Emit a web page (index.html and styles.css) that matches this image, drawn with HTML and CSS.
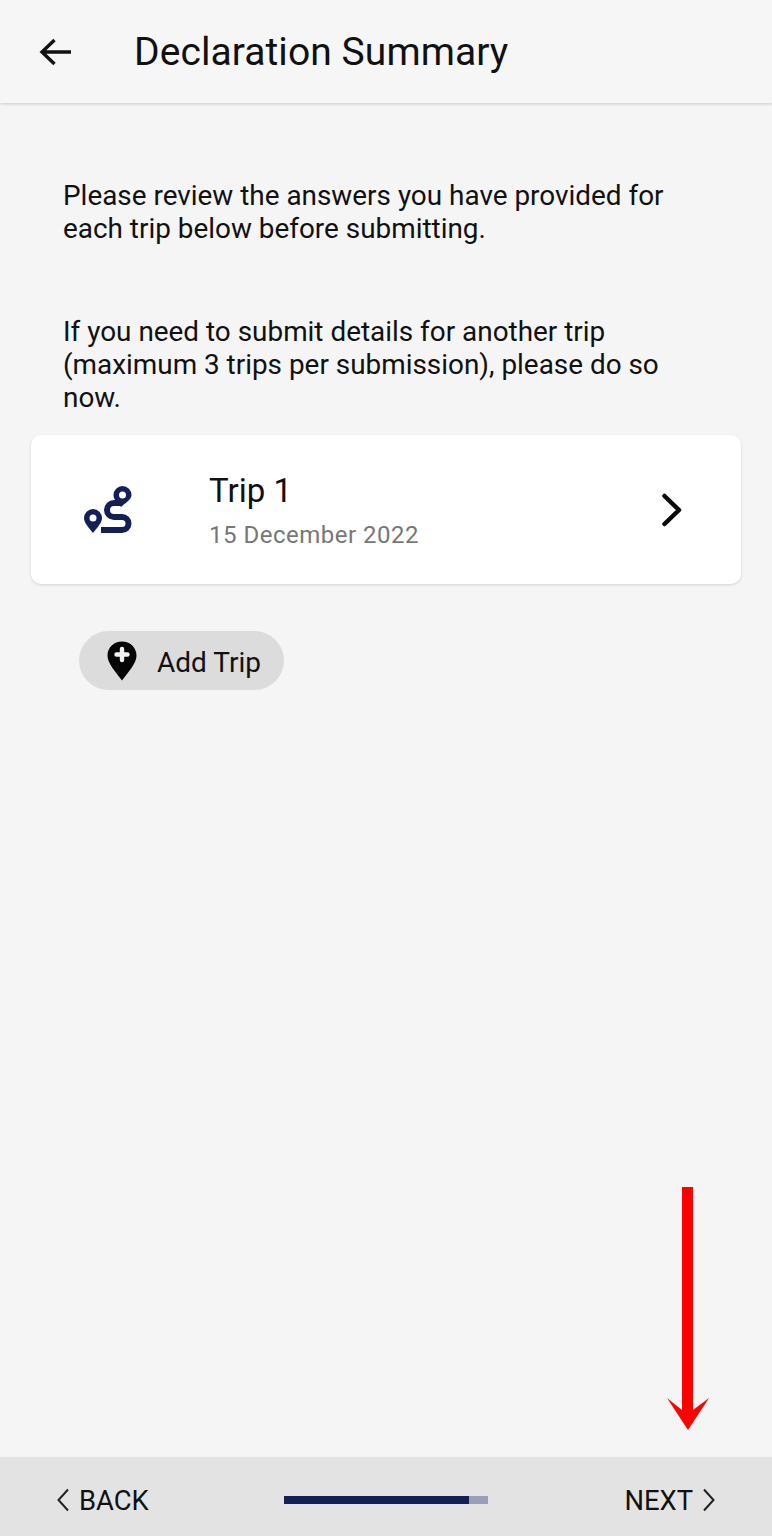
FILE: index.html
```html
<!DOCTYPE html>
<html lang="en">
<head>
    <meta charset="UTF-8" />
    <meta name="viewport" content="width=device-width, initial-scale=1.0" />
    <title>Declaration Summary</title>
    <link rel="stylesheet" href="styles.css">
</head>
<body>
    <div class="screen">
        <header class="topbar">
            <svg class="back-icon" viewBox="0 0 34 30" width="34" height="30">
                <path d="M32 15H3M15.500 3 3 15l12.500 12" fill="none" stroke="#111" stroke-width="3.400" />
            </svg>
            <h1 class="title">Declaration Summary</h1>
        </header>

        <main class="content">
            <p class="intro intro-first">Please review the answers you have provided for each trip below before submitting.</p>
            <p class="intro intro-second">If you need to submit details for another trip (maximum 3 trips per submission), please do so now.</p>

            <div class="trip-card">
                <svg class="trip-icon" viewBox="0 0 48 48" width="48" height="48">
                    <path fill="#141f55" fill-rule="evenodd" d="M9 23a9 9 0 0 0-9 9c0 5 4.800 9.500 9 15 4.200-5.500 9-10 9-15a9 9 0 0 0-9-9Zm0 5.500a3.500 3.500 0 1 1 0 7 3.500 3.500 0 0 1 0-7Z" />
                    <path fill="#141f55" fill-rule="evenodd" d="M38.500 0a9 9 0 0 0-9 9c0 5 4.500 8 7.500 12 3.500-3.500 10.500-7 10.500-12a9 9 0 0 0-9-9Zm0 5.500a3.500 3.500 0 1 1 0 7 3.500 3.500 0 0 1 0-7Z" />
                    <path fill="none" stroke="#141f55" stroke-width="6" d="M38 17H30a7 7 0 0 0 0 14H38a6.500 6.500 0 0 1 0 13H17" />
                </svg>
                <div class="trip-text">
                    <div class="trip-name">Trip 1</div>
                    <div class="trip-date">15 December 2022</div>
                </div>
                <svg class="chevron" viewBox="0 0 22 34" width="22" height="34">
                    <path d="M3.500 3 18 17 3.500 31" fill="none" stroke="#0a0a0a" stroke-width="4.500" stroke-linecap="round" stroke-linejoin="round" />
                </svg>
            </div>

            <button class="add-trip">
                <svg viewBox="0 0 30 40" width="30" height="40">
                    <path fill="#050505" d="M15 .5C7 .5.500 6.500.500 14.500c0 8 8 16 14.500 25 6.500-9 14.500-17 14.500-25C29.500 6.500 23 .5 15 .5Z" />
                    <path fill="none" stroke="#f2f2f2" stroke-width="4.400" stroke-linecap="round" d="M15 8v11M9.500 13.500h11" />
                </svg>
                <span class="add-label">Add Trip</span>
            </button>
        </main>

        <footer class="bottombar">
            <div class="nav-btn">
                <svg viewBox="0 0 14 24" width="14" height="24"><path d="M12 1.500 2.500 12 12 22.500" fill="none" stroke="#222" stroke-width="2" /></svg>
                <span class="nav-label">BACK</span>
            </div>
            <div class="progress"><div class="progress-fill"></div></div>
            <div class="nav-btn">
                <span class="nav-label">NEXT</span>
                <svg viewBox="0 0 14 24" width="14" height="24"><path d="M2 1.500 11.500 12 2 22.500" fill="none" stroke="#222" stroke-width="2" /></svg>
            </div>
        </footer>

        <svg class="red-arrow" viewBox="0 0 42 243" width="42" height="243">
            <path fill="#ff0000" d="M15 0h11v223l16-12-21 32-21-32 15 12Z" />
        </svg>
    </div>
</body>
</html>
```

FILE: styles.css
```css
body {
    margin: 0;
    padding: 0;
    font-family: Roboto, sans-serif;
    background-color: #f5f5f5;
}
.screen {
    position: relative;
    display: flex;
    flex-direction: column;
    width: 772px;
    height: 1536px;
    overflow: hidden;
}
.topbar {
    display: flex;
    align-items: center;
    height: 103px;
    padding-left: 39px;
    flex-shrink: 0;
    background-color: #f6f6f6;
    box-shadow: 0 1px 3px rgba(0, 0, 0, 0.18);
}
.title {
    margin: 0 0 0 61px;
    font-size: 39px;
    font-weight: 400;
    letter-spacing: 0.07px;
    color: #111;
}
.content {
    flex: 1;
    padding: 76px 31px 0;
}
.intro {
    margin: 0 32px;
    font-size: 27.900px;
    line-height: 33px;
    color: #111;
}
.intro-second {
    margin-top: 70px;
    margin-bottom: 21px;
}
.trip-card {
    display: flex;
    align-items: center;
    height: 149px;
    padding: 0 58px 0 53px;
    background-color: #fff;
    border-radius: 10px;
    box-shadow: 0 1px 3px rgba(0, 0, 0, 0.14);
}
.trip-text {
    flex: 1;
    margin-left: 77px;
    padding-top: 2px;
}
.trip-name {
    font-size: 33px;
    line-height: 38px;
    color: #111;
}
.trip-date {
    margin-top: 11px;
    font-size: 24px;
    line-height: 28px;
    letter-spacing: 0.5px;
    color: #777;
}
.add-trip {
    display: flex;
    align-items: center;
    gap: 20px;
    width: 205px;
    height: 59px;
    margin: 47px 0 0 48px;
    padding: 0 0 0 28px;
    border: none;
    border-radius: 30px;
    background-color: #dcdcdc;
    font-family: Roboto, sans-serif;
    font-size: 28px;
    color: #111;
}
.add-label {
    padding-top: 3px;
}
.bottombar {
    display: flex;
    align-items: center;
    justify-content: space-between;
    height: 79px;
    padding: 6px 56px 0;
    box-sizing: border-box;
    flex-shrink: 0;
    background-color: #e3e3e3;
}
.nav-btn {
    display: flex;
    align-items: center;
    gap: 9px;
    font-size: 27.400px;
    color: #111;
}
.nav-label {
    padding-top: 2px;
}
.progress {
    width: 204px;
    height: 8px;
    margin-right: 2px;
    background-color: #9a9eb8;
}
.progress-fill {
    width: 185px;
    height: 100%;
    background-color: #141f55;
}
.red-arrow {
    position: absolute;
    left: 667px;
    top: 1187px;
}
```
